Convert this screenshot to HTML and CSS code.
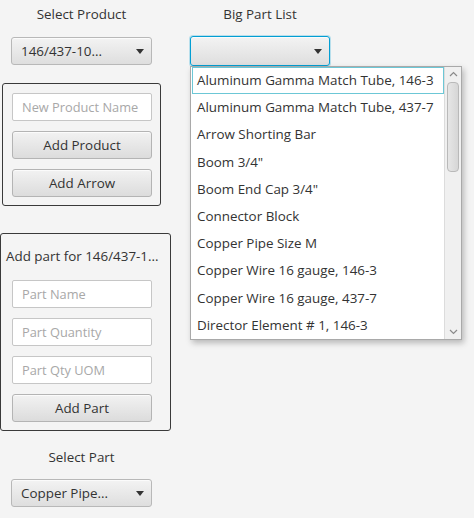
FILE: index.html
```html
<!DOCTYPE html>
<html>
<head>
<meta charset="utf-8">
<link rel="stylesheet" href="styles.css">
</head>
<body>
<div class="app">
  <div class="left">
    <div class="label top-label">Select Product</div>
    <div class="combo c-product"><span class="combo-text">146/437-10...</span><span class="arrow"></span></div>
    <div class="box box1">
      <div class="field"><span class="ph">New Product Name</span></div>
      <div class="btn">Add Product</div>
      <div class="btn">Add Arrow</div>
    </div>
    <div class="box box2">
      <div class="label box-label">Add part for 146/437-1...</div>
      <div class="field"><span class="ph">Part Name</span></div>
      <div class="field"><span class="ph">Part Quantity</span></div>
      <div class="field"><span class="ph">Part Qty UOM</span></div>
      <div class="btn">Add Part</div>
    </div>
    <div class="label part-label">Select Part</div>
    <div class="combo c-part"><span class="combo-text">Copper Pipe...</span><span class="arrow"></span></div>
  </div>
  <div class="right">
    <div class="label top-label">Big Part List</div>
    <div class="combo c-big focused"><span class="combo-text"></span><span class="arrow"></span></div>
    <div class="popup">
      <ul class="list">
        <li class="cell focus">Aluminum Gamma Match Tube, 146-3</li>
        <li class="cell">Aluminum Gamma Match Tube, 437-7</li>
        <li class="cell">Arrow Shorting Bar</li>
        <li class="cell">Boom 3/4"</li>
        <li class="cell">Boom End Cap 3/4"</li>
        <li class="cell">Connector Block</li>
        <li class="cell">Copper Pipe Size M</li>
        <li class="cell">Copper Wire 16 gauge, 146-3</li>
        <li class="cell">Copper Wire 16 gauge, 437-7</li>
        <li class="cell">Director Element # 1, 146-3</li>
      </ul>
      <div class="scrollbar">
        <div class="sb-btn up"><svg width="9" height="6" viewBox="0 0 9 6"><path d="M1 5 L4.5 1.5 L8 5" fill="none" stroke="#8a8a8a" stroke-width="1.2"/></svg></div>
        <div class="track"><div class="thumb"></div></div>
        <div class="sb-btn down"><svg width="9" height="6" viewBox="0 0 9 6"><path d="M1 1 L4.5 4.5 L8 1" fill="none" stroke="#8a8a8a" stroke-width="1.2"/></svg></div>
      </div>
    </div>
  </div>
</div>
</body>
</html>
```

FILE: styles.css
```css
* { box-sizing: border-box; }
html, body {
  margin: 0;
  padding: 0;
  background: #f4f4f4;
}
body {
  width: 474px;
  height: 518px;
  overflow: hidden;
  font-family: "Open Sans", "Noto Sans", sans-serif;
  font-size: 13.4px;
  color: #333333;
}
.app {
  display: flex;
  position: relative;
}
.left {
  width: 172px;
  display: flex;
  flex-direction: column;
  align-items: flex-start;
}
.right {
  display: flex;
  flex-direction: column;
  align-items: flex-start;
  margin-left: 18px;
  position: relative;
}
.label {
  line-height: 18px;
  text-align: center;
  white-space: nowrap;
}
.top-label {
  width: 141px;
  margin-left: 11px;
  margin-top: 5px;
  height: 18px;
}
.right .top-label {
  margin-left: 0;
  width: 140px;
}
.combo {
  position: relative;
  height: 28px;
  border: 1px solid #b8b8b8;
  border-radius: 3px;
  background: linear-gradient(#f3f3f3, #dedede);
  box-shadow: inset 0 1px 0 #fbfbfb;
  display: flex;
  align-items: center;
  padding-left: 9px;
}
.combo-text {
  flex: 1;
  white-space: nowrap;
}
.arrow {
  width: 0;
  height: 0;
  border-left: 4.5px solid transparent;
  border-right: 4.5px solid transparent;
  border-top: 5px solid #333333;
  margin-right: 7px;
}
.c-product {
  width: 141px;
  margin-left: 11px;
  margin-top: 14px;
}
.c-big {
  width: 140px;
  margin-top: 13px;
  height: 30px;
}
.focused {
  border: 1px solid #039ed3;
  box-shadow: 0 0 0 1px rgba(3,158,211,0.25), inset 0 1px 0 #fbfbfb;
}
.box {
  border: 1px solid #3a3a3a;
  border-radius: 3px;
  display: flex;
  flex-direction: column;
  gap: 10px;
}
.box1 {
  margin-left: 2px;
  margin-top: 18px;
  width: 159px;
  padding: 9px 8px 8px 9px;
}
.box2 {
  margin-left: 0;
  margin-top: 27px;
  width: 171px;
  padding: 9px 8px 8px 11px;
}
.box-label {
  text-align: left;
  margin-left: -6px;
  line-height: 27px;
  height: 27px;
}
.field {
  width: 140px;
  height: 28px;
  background: #ffffff;
  border: 1px solid #c6c6c6;
  border-radius: 2px;
  display: flex;
  align-items: center;
  padding-left: 9px;
  overflow: hidden;
}
.ph {
  color: #a8a8a8;
  white-space: nowrap;
  font-size: 12.8px;
}
.btn {
  width: 140px;
  height: 28px;
  border: 1px solid #b4b4b4;
  border-radius: 3px;
  background: linear-gradient(#f2f2f2, #dcdcdc);
  box-shadow: inset 0 1px 0 #fbfbfb;
  display: flex;
  align-items: center;
  justify-content: center;
  white-space: nowrap;
}
.part-label {
  width: 141px;
  margin-left: 11px;
  margin-top: 17px;
  height: 18px;
}
.c-part {
  width: 141px;
  margin-left: 11px;
  margin-top: 13px;
}
.popup {
  position: absolute;
  left: 0;
  top: 66px;
  width: 272px;
  height: 274px;
  background: #ffffff;
  border: 1px solid #a9a9a9;
  box-shadow: 2px 3px 6px rgba(0,0,0,0.25);
  display: flex;
}
.list {
  list-style: none;
  margin: 0;
  padding: 0;
  flex: 1;
}
.cell {
  height: 27.2px;
  line-height: 24px;
  padding-left: 5px;
  white-space: nowrap;
  border: 1px solid transparent;
  color: #333333;
}
.cell.focus {
  border: 1px solid #6cc7d6;
  margin-left: 1px;
  padding-left: 4px;
}
.scrollbar {
  width: 17px;
  background: #f0f0f0;
  border-left: 1px solid #dcdcdc;
  display: flex;
  flex-direction: column;
}
.sb-btn {
  height: 14px;
  display: flex;
  align-items: center;
  justify-content: center;
}
.track {
  flex: 1;
  padding: 0 2px;
}
.thumb {
  margin-top: 1px;
  height: 90px;
  border: 1px solid #b9b9b9;
  border-radius: 4px;
  background: linear-gradient(90deg, #e6e6e6, #d6d6d6);
}
```
